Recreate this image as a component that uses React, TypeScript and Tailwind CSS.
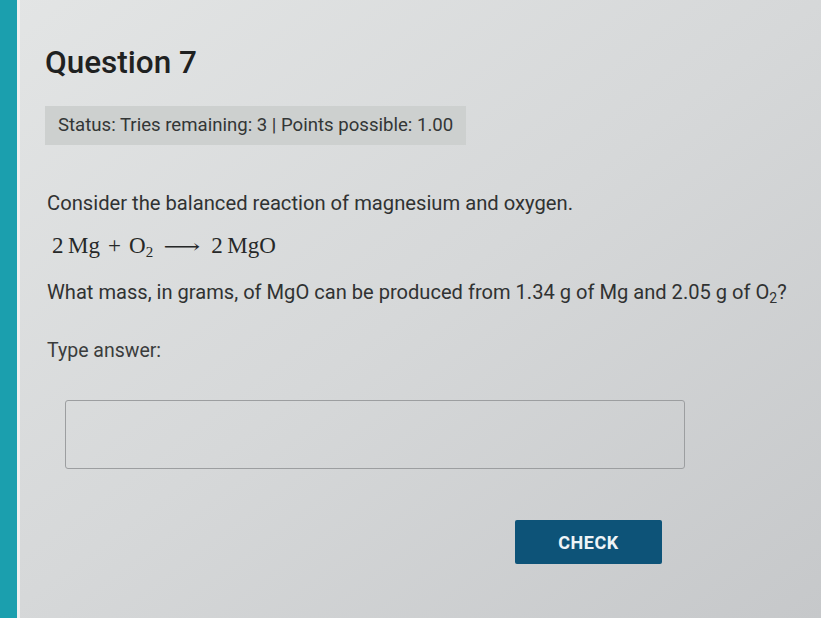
export default function App() {
  return (
    <div
      className="flex h-[618px] w-[821px] overflow-hidden bg-linear-to-br from-[#e3e5e5] via-[#d6d8d9] to-[#c6c8ca]"
      style={{ fontFamily: "Roboto, 'Liberation Sans', sans-serif" }}
    >
      <div className="w-[17px] shrink-0 bg-[#1b9fae]" />
      <div className="w-[3px] shrink-0 bg-[#eef0f0]" />
      <div className="flex flex-col pl-[25px] pt-[45px]">
        <h1 className="h-[36px] text-[31.5px] font-medium leading-[36px] text-[#1f2121]">Question 7</h1>

        <div className="mt-[25px] flex h-[39px] w-[421px] items-center whitespace-nowrap bg-[#cdd0cf] px-[13px] text-[18.6px] text-[#333636]">
          Status: Tries remaining: 3 | Points possible: 1.00
        </div>

        <p className="ml-[2px] mt-[44px] whitespace-nowrap text-[20.2px] leading-[28px] text-[#303232]">
          Consider the balanced reaction of magnesium and oxygen.
        </p>

        <div
          className="ml-[7px] mt-[14px] flex items-baseline text-[23px] leading-[30px] text-[#262828]"
          style={{ fontFamily: "'Liberation Serif', 'DejaVu Serif', serif" }}
        >
          <span>2&thinsp;Mg</span>
          <span className="mx-[8px]">+</span>
          <span>
            O<sub className="text-[15px]">2</sub>
          </span>
          <span className="mx-[10px] inline-block w-[38px] scale-x-[1.35] text-center text-[19px]">⟶</span>
          <span>2&thinsp;MgO</span>
        </div>

        <p className="ml-[2px] mt-[16px] whitespace-nowrap text-[20.1px] leading-[28px] text-[#303232]">
          What mass, in grams, of MgO can be produced from 1.34 g of Mg and 2.05 g of O
          <sub className="text-[14px]">2</sub>?
        </p>

        <p className="ml-[2px] mt-[32px] text-[19.5px] leading-[26px] text-[#3a3c3c]">Type answer:</p>

        <div className="ml-[20px] mt-[36px] h-[69px] w-[620px] rounded-[3px] border border-[#9c9ea0]" />

        <button className="ml-[470px] mt-[51px] flex h-[44px] w-[147px] items-center justify-center rounded-[2px] bg-[#0d5378] text-[18px] font-bold tracking-[0.5px] text-[#eef4f7]">
          CHECK
        </button>
      </div>
    </div>
  );
}
